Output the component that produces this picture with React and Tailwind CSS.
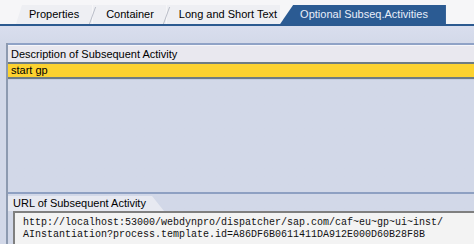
import React from "react";

const Sep = () => <div className="w-px h-[17px] bg-[#b9bdc7] -skew-x-[20deg]" />;

const App = () => {
  return (
    <div className="w-[474px] h-[244px] overflow-hidden flex flex-col bg-[#d2d8e8] text-black font-['Liberation_Sans',Arial,sans-serif] text-[11px] leading-none">
      {/* tab strip */}
      <div className="h-[24px] shrink-0 bg-[#f6f6f8] flex items-end pl-[16px]">
        <div className="h-[19px] flex items-center bg-[#eeeff3] pl-[13px] pr-[13px] [clip-path:polygon(6px_0,100%_0,100%_100%,0_100%)]">
          Properties
        </div>
        <Sep />
        <div className="h-[19px] flex items-center bg-[#eeeff3] pl-[13px] pr-[12px]">Container</div>
        <Sep />
        <div className="h-[19px] flex items-center bg-[#eeeff3] pl-[12px] pr-[3px]">Long and Short Text</div>
        <div className="h-[19px] flex items-center bg-[#2b5b93] text-[#e8eefa] pl-[20px] pr-[18px] [clip-path:polygon(13px_0,100%_0,100%_100%,0_100%)]">
          Optional Subseq.Activities
        </div>
      </div>
      <div className="h-[2px] shrink-0 bg-[#2c5a90]" />

      {/* body */}
      <div className="flex-1 flex flex-col bg-gradient-to-b from-[#d9deee] to-[#d2d8e8] to-[20px] pl-[6px]">
        <div className="h-[17px] shrink-0" />
        <div className="flex-1 flex flex-col border-l-2 border-[#8d9ab0]">
          <div className="border-t-2 border-[#8fa2c6]" />
          <div className="h-[17px] flex items-center pl-[3px] bg-[#e9e8ef] border-t border-[#f6f6fa]">
            Description of Subsequent Activity
          </div>
          <div className="h-[17px] flex items-center pl-[3px] bg-[#fcd22f] border-y-2 border-[#6e7c82]">
            start gp
          </div>
          <div className="h-px bg-[#c4cde2]" />
          <div className="flex-1" />

          <div className="border-t-2 border-[#8ea0c2]" />
          <div className="h-[2px]" />
          <div className="h-[15px] w-[156px] flex items-center pl-[5px] bg-[#e7e9f1] [clip-path:polygon(0_0,144px_0,100%_100%,0_100%)]">
            URL of Subsequent Activity
          </div>
          <div className="h-[33px] ml-[5px] bg-[#f3f3f3] border-l-2 border-t-2 border-[#7f7f7f] pl-[8px] pt-[4px] font-['Liberation_Mono',monospace] text-[10px] leading-[12px] text-[#111] whitespace-pre">
            <div>http://localhost:53000/webdynpro/dispatcher/sap.com/caf~eu~gp~ui~inst/</div>
            <div>AInstantiation?process.template.id=A86DF6B0611411DA912E000D60B28F8B</div>
          </div>
        </div>
      </div>
    </div>
  );
};

export default App;
